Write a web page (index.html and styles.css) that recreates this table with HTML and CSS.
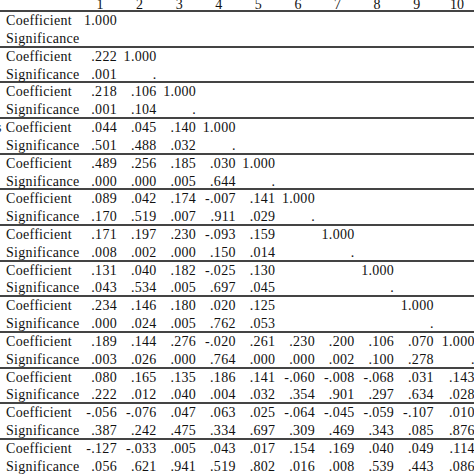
FILE: index.html
```html
<!DOCTYPE html>
<html>
<head>
<meta charset="utf-8">
<link rel="stylesheet" href="styles.css">
</head>
<body>
<div class="matrix">
  <div class="head">
    <span></span><span>1</span><span>2</span><span>3</span><span>4</span><span>5</span><span>6</span><span>7</span><span>8</span><span>9</span><span>10</span>
  </div>

  <div class="group">
    <span class="lbl">Coefficient</span><span>1.000</span><span></span><span></span><span></span><span></span><span></span><span></span><span></span><span></span><span></span>
    <span class="lbl">Significance</span><span></span><span></span><span></span><span></span><span></span><span></span><span></span><span></span><span></span><span></span>
  </div>

  <div class="group">
    <span class="lbl">Coefficient</span><span>.222</span><span>1.000</span><span></span><span></span><span></span><span></span><span></span><span></span><span></span><span></span>
    <span class="lbl">Significance</span><span>.001</span><span>.</span><span></span><span></span><span></span><span></span><span></span><span></span><span></span><span></span>
  </div>

  <div class="group">
    <span class="lbl">Coefficient</span><span>.218</span><span>.106</span><span>1.000</span><span></span><span></span><span></span><span></span><span></span><span></span><span></span>
    <span class="lbl">Significance</span><span>.001</span><span>.104</span><span>.</span><span></span><span></span><span></span><span></span><span></span><span></span><span></span>
  </div>

  <div class="group">
    <span class="lbl"><span class="cut">s</span>Coefficient</span><span>.044</span><span>.045</span><span>.140</span><span>1.000</span><span></span><span></span><span></span><span></span><span></span><span></span>
    <span class="lbl">Significance</span><span>.501</span><span>.488</span><span>.032</span><span>.</span><span></span><span></span><span></span><span></span><span></span><span></span>
  </div>

  <div class="group">
    <span class="lbl">Coefficient</span><span>.489</span><span>.256</span><span>.185</span><span>.030</span><span>1.000</span><span></span><span></span><span></span><span></span><span></span>
    <span class="lbl">Significance</span><span>.000</span><span>.000</span><span>.005</span><span>.644</span><span>.</span><span></span><span></span><span></span><span></span><span></span>
  </div>

  <div class="group">
    <span class="lbl">Coefficient</span><span>.089</span><span>.042</span><span>.174</span><span>-.007</span><span>.141</span><span>1.000</span><span></span><span></span><span></span><span></span>
    <span class="lbl">Significance</span><span>.170</span><span>.519</span><span>.007</span><span>.911</span><span>.029</span><span>.</span><span></span><span></span><span></span><span></span>
  </div>

  <div class="group">
    <span class="lbl">Coefficient</span><span>.171</span><span>.197</span><span>.230</span><span>-.093</span><span>.159</span><span></span><span>1.000</span><span></span><span></span><span></span>
    <span class="lbl">Significance</span><span>.008</span><span>.002</span><span>.000</span><span>.150</span><span>.014</span><span></span><span>.</span><span></span><span></span><span></span>
  </div>

  <div class="group">
    <span class="lbl">Coefficient</span><span>.131</span><span>.040</span><span>.182</span><span>-.025</span><span>.130</span><span></span><span></span><span>1.000</span><span></span><span></span>
    <span class="lbl">Significance</span><span>.043</span><span>.534</span><span>.005</span><span>.697</span><span>.045</span><span></span><span></span><span>.</span><span></span><span></span>
  </div>

  <div class="group">
    <span class="lbl">Coefficient</span><span>.234</span><span>.146</span><span>.180</span><span>.020</span><span>.125</span><span></span><span></span><span></span><span>1.000</span><span></span>
    <span class="lbl">Significance</span><span>.000</span><span>.024</span><span>.005</span><span>.762</span><span>.053</span><span></span><span></span><span></span><span>.</span><span></span>
  </div>

  <div class="group">
    <span class="lbl">Coefficient</span><span>.189</span><span>.144</span><span>.276</span><span>-.020</span><span>.261</span><span>.230</span><span>.200</span><span>.106</span><span>.070</span><span>1.000</span>
    <span class="lbl">Significance</span><span>.003</span><span>.026</span><span>.000</span><span>.764</span><span>.000</span><span>.000</span><span>.002</span><span>.100</span><span>.278</span><span>.</span>
  </div>

  <div class="group">
    <span class="lbl">Coefficient</span><span>.080</span><span>.165</span><span>.135</span><span>.186</span><span>.141</span><span>-.060</span><span>-.008</span><span>-.068</span><span>.031</span><span>.143</span>
    <span class="lbl">Significance</span><span>.222</span><span>.012</span><span>.040</span><span>.004</span><span>.032</span><span>.354</span><span>.901</span><span>.297</span><span>.634</span><span>.028</span>
  </div>

  <div class="group">
    <span class="lbl">Coefficient</span><span>-.056</span><span>-.076</span><span>.047</span><span>.063</span><span>.025</span><span>-.064</span><span>-.045</span><span>-.059</span><span>-.107</span><span>.010</span>
    <span class="lbl">Significance</span><span>.387</span><span>.242</span><span>.475</span><span>.334</span><span>.697</span><span>.309</span><span>.469</span><span>.343</span><span>.085</span><span>.876</span>
  </div>

  <div class="group">
    <span class="lbl">Coefficient</span><span>-.127</span><span>-.033</span><span>.005</span><span>.043</span><span>.017</span><span>.154</span><span>.169</span><span>.040</span><span>.049</span><span>.114</span>
    <span class="lbl">Significance</span><span>.056</span><span>.621</span><span>.941</span><span>.519</span><span>.802</span><span>.016</span><span>.008</span><span>.539</span><span>.443</span><span>.086</span>
  </div>
</div>
</body>
</html>
```

FILE: styles.css
```css
html, body {
  margin: 0;
  padding: 0;
  background: #ffffff;
  overflow: hidden;
}

.matrix {
  width: 476px;
  margin-top: -1px;
  font-family: "Liberation Serif", "Times New Roman", serif;
  font-size: 14px;
  letter-spacing: 0.3px;
  color: #111111;
}

.head,
.group {
  display: grid;
  grid-template-columns: 77.4px repeat(9, 39.6px) 41px;
  white-space: nowrap;
}

.head {
  height: 11px;
  line-height: 11px;
  border-bottom: 2px solid #444444;
}

.head span {
  text-align: center;
  padding-left: 5.5px;
  letter-spacing: 0;
}

.group {
  grid-template-rows: 17.9px 15.77px;
  line-height: 17.6px;
  border-bottom: 2px solid #444444;
}

.group span {
  text-align: right;
  display: block;
  height: 100%;
}

.group .lbl {
  text-align: left;
  padding-left: 6px;
}

.group .cut {
  display: inline;
  margin-left: -10px;
  margin-right: 4px;
}
```
